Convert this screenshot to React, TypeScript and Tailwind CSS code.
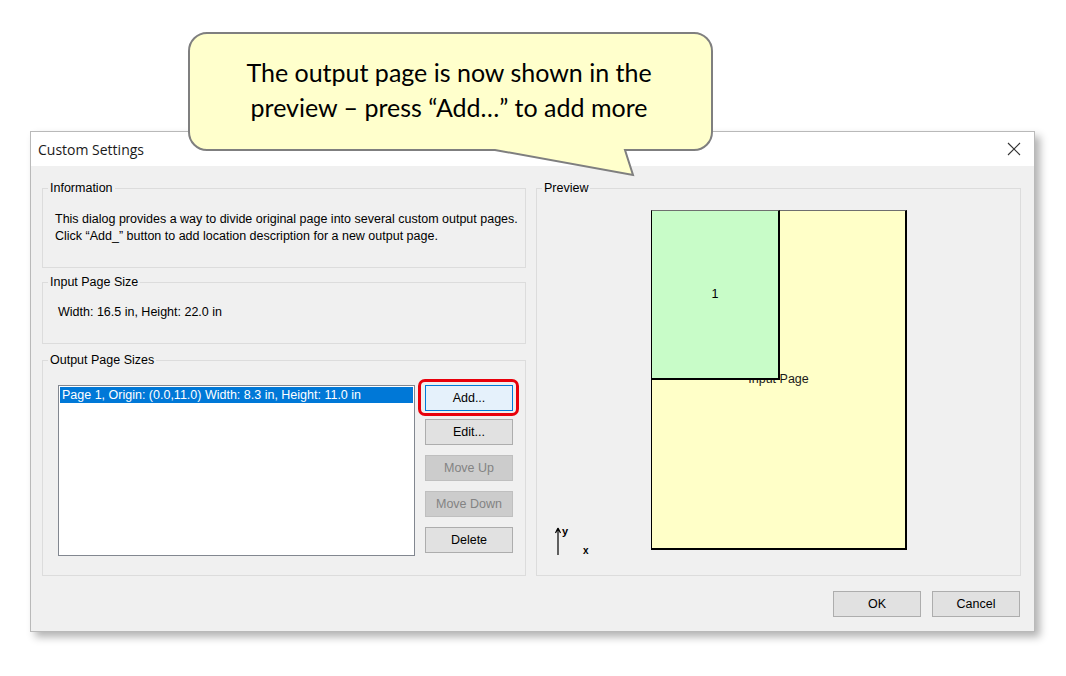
import React from 'react';

// --- small win32-ish pieces ---

function GroupBox({ label, className = '', children }: { label: string; className?: string; children?: React.ReactNode }) {
  return (
    <fieldset className={`relative border border-[#dcdcdc] ${className}`}>
      <legend className="ml-[5px] px-[2px] leading-[14px] text-black">{label}</legend>
      {children}
    </fieldset>
  );
}

interface WinButtonProps {
  label: string;
  disabled?: boolean;
  focused?: boolean;
  className?: string;
}

function WinButton({ label, disabled = false, focused = false, className = '' }: WinButtonProps) {
  const look = focused
    ? 'bg-[#e5f1fb] border-[#0078d7] text-black'
    : disabled
      ? 'bg-[#cccccc] border-[#bfbfbf] text-[#838383]'
      : 'bg-[#e1e1e1] border-[#adadad] text-black';
  return (
    <button
      type="button"
      className={`flex h-[26px] w-[88px] items-center justify-center border leading-none ${look} ${className}`}
    >
      {label}
    </button>
  );
}

function Callout() {
  return (
    <div className="absolute left-[188px] top-[32px] h-[146px] w-[526px]">
      <svg className="absolute inset-0" width="526" height="146" viewBox="0 0 526 146">
        <path
          d="M 19 1 H 506 A 18 18 0 0 1 524 19 V 100 A 18 18 0 0 1 506 118 H 437 L 445 143 L 307 118 H 19 A 18 18 0 0 1 1 100 V 19 A 18 18 0 0 1 19 1 Z"
          fill="#ffffcc"
          stroke="#7f7f7f"
          strokeWidth={2}
        />
      </svg>
      <div className="absolute left-0 top-[23px] w-[522px] text-center font-['Lato','Open_Sans',sans-serif] text-[25px] leading-[35px] text-black">
        The output page is now shown in the
        <br />
        preview – press “Add…” to add more
      </div>
    </div>
  );
}

export default function App() {
  return (
    <div className="relative h-[676px] w-[1066px] overflow-hidden bg-white font-['Liberation_Sans',Arial,sans-serif] text-[12.5px] text-black">
      <div className="ml-[30px] mt-[131px] flex h-[501px] w-[1005px] flex-col border border-[#b9b9b9] shadow-[5px_5px_8px_rgba(0,0,0,0.3)]">
        {/* title bar */}
        <div className="flex h-[34px] items-center justify-between bg-white pl-[7px] pr-[13px]">
          <span className="font-['Open_Sans',sans-serif] text-[14px] text-[#1a1a1a]">Custom Settings</span>
          <svg width="14" height="14" viewBox="0 0 14 14">
            <path d="M1 1 L13 13 M13 1 L1 13" stroke="#333" strokeWidth={1.1} />
          </svg>
        </div>

        {/* body */}
        <div className="flex flex-1 flex-col bg-[#f0f0f0] pl-[11px] pr-[13px] pt-[15px]">
          <div className="flex gap-[10px]">
            {/* left column */}
            <div className="flex w-[484px] flex-col">
              <GroupBox label="Information" className="h-[87px]">
                <p className="pl-[12px] pt-[16px] leading-[17px]">
                  This dialog provides a way to divide original page into several custom output pages.
                  <br />
                  Click “Add_” button to add location description for a new output page.
                </p>
              </GroupBox>

              <GroupBox label="Input Page Size" className="mt-[7px] h-[69px]">
                <p className="pl-[15px] pt-[15px] leading-[17px]">Width: 16.5 in, Height: 22.0 in</p>
              </GroupBox>

              <GroupBox label="Output Page Sizes" className="mt-[9px] h-[223px]">
                <div className="flex gap-[10px] pl-[15px] pt-[18px]">
                  <div className="h-[171px] w-[357px] border border-[#828790] bg-white p-[1px]">
                    <div className="h-[16px] bg-[#0078d7] pl-[2px] leading-[16px] text-white">
                      Page 1, Origin: (0.0,11.0) Width: 8.3 in, Height: 11.0 in
                    </div>
                  </div>
                  <div className="flex flex-col">
                    <div className="relative">
                      <span className="absolute -bottom-[5px] -left-[7px] -right-[6px] -top-[6px] rounded-[7px] border-[3px] border-[#e8000b]" />
                      <WinButton label="Add..." focused />
                    </div>
                    <WinButton label="Edit..." className="mt-[8px]" />
                    <WinButton label="Move Up" disabled className="mt-[10px]" />
                    <WinButton label="Move Down" disabled className="mt-[10px]" />
                    <WinButton label="Delete" className="mt-[10px]" />
                  </div>
                </div>
              </GroupBox>
            </div>

            {/* preview */}
            <GroupBox label="Preview" className="h-[395px] w-[485px]">
              <div className="ml-[114px] mt-[15px] relative h-[340px] w-[256px] border-l border-t border-b-2 border-r-2 border-black border-t-[#6f6f6f] bg-[#ffffc8]">
                <div className="flex h-full items-center justify-center leading-none text-[#1a1a1a]">Input Page</div>
                <div className="absolute left-[-1px] top-[-1px] flex h-[170px] w-[129px] items-center justify-center border-l border-t border-b-2 border-r-2 border-black border-t-[#6f6f6f] bg-[#c8fcc8] leading-none">
                  1
                </div>
              </div>
              <svg className="absolute left-[14px] top-[329px]" width="45" height="35" viewBox="0 0 45 35">
                <path d="M7 4 V31 M7 4 L4.5 9 M7 4 L9.5 9" stroke="#000" strokeWidth={1.2} fill="none" />
                <text x="11" y="11" fontSize="11" fontWeight="bold" fontFamily="Liberation Sans, Arial, sans-serif">y</text>
                <text x="32" y="30" fontSize="10" fontWeight="bold" fontFamily="Liberation Sans, Arial, sans-serif">x</text>
              </svg>
            </GroupBox>
          </div>

          <div className="mt-[15px] flex justify-end gap-[11px] pr-[1px]">
            <WinButton label="OK" />
            <WinButton label="Cancel" />
          </div>
        </div>
      </div>

      <Callout />
    </div>
  );
}
